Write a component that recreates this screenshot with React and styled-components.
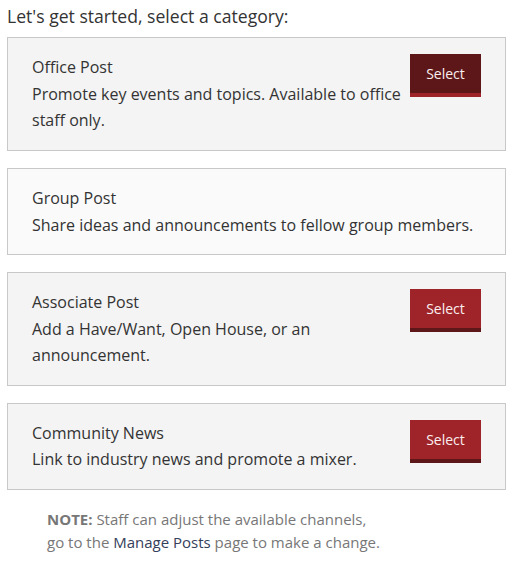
import React from 'react';
import styled, { createGlobalStyle } from 'styled-components';

const GlobalStyle = createGlobalStyle`
  body {
    margin: 0;
    background: #fff;
    font-family: "Open Sans", "Liberation Sans", sans-serif;
    color: #333;
  }
`;

const Container = styled.div`
  padding: 4px 7px 0 7px;
  width: 499px;
`;

const Heading = styled.h2`
  margin: 0 0 8px 0;
  font-size: 17.6px;
  font-weight: 400;
  line-height: 25px;
  color: #333;
`;

const List = styled.div`
  display: flex;
  flex-direction: column;
  gap: 16.7px;
`;

const Card = styled.div`
  display: flex;
  align-items: flex-start;
  gap: 8px;
  padding: 16px 24px;
  border: 1px solid #c8c8c8;
  background-color: ${props => (props.$light ? '#fafafa' : '#f4f4f4')};
`;

const Info = styled.div`
  flex: 1;
  font-size: 16px;
  line-height: 26.7px;
  color: #333;
`;

const Title = styled.div``;

const Desc = styled.div``;

const Button = styled.button`
  flex-shrink: 0;
  width: 71px;
  height: 43px;
  padding: 0;
  border: none;
  border-bottom: 4px solid ${props => (props.$active ? '#9e2429' : '#5e1719')};
  background-color: ${props => (props.$active ? '#5e1719' : '#9e2429')};
  color: #fbeeee;
  font-family: "Open Sans", "Liberation Sans", sans-serif;
  font-size: 14px;
  cursor: pointer;
`;

const Note = styled.p`
  margin: 18px 0 0 40px;
  font-size: 15px;
  line-height: 23px;
  color: #777;
`;

const NoteLabel = styled.strong`
  font-weight: 700;
`;

const NoteLink = styled.a`
  color: #34405a;
  text-decoration: none;
`;

const categories = [
  {
    title: 'Office Post',
    desc: 'Promote key events and topics. Available to office staff only.',
    button: true,
    active: true,
  },
  {
    title: 'Group Post',
    desc: 'Share ideas and announcements to fellow group members.',
    light: true,
  },
  {
    title: 'Associate Post',
    desc: 'Add a Have/Want, Open House, or an announcement.',
    button: true,
  },
  {
    title: 'Community News',
    desc: 'Link to industry news and promote a mixer.',
    button: true,
  },
];

export default function App() {
  return (
    <Container>
      <GlobalStyle />
      <Heading>Let's get started, select a category:</Heading>
      <List>
        {categories.map(cat => (
          <Card key={cat.title} $light={cat.light}>
            <Info>
              <Title>{cat.title}</Title>
              <Desc>{cat.desc}</Desc>
            </Info>
            {cat.button && <Button $active={cat.active}>Select</Button>}
          </Card>
        ))}
      </List>
      <Note>
        <NoteLabel>NOTE:</NoteLabel> Staff can adjust the available channels,
        <br />
        go to the <NoteLink href="#">Manage Posts</NoteLink> page to make a change.
      </Note>
    </Container>
  );
}
